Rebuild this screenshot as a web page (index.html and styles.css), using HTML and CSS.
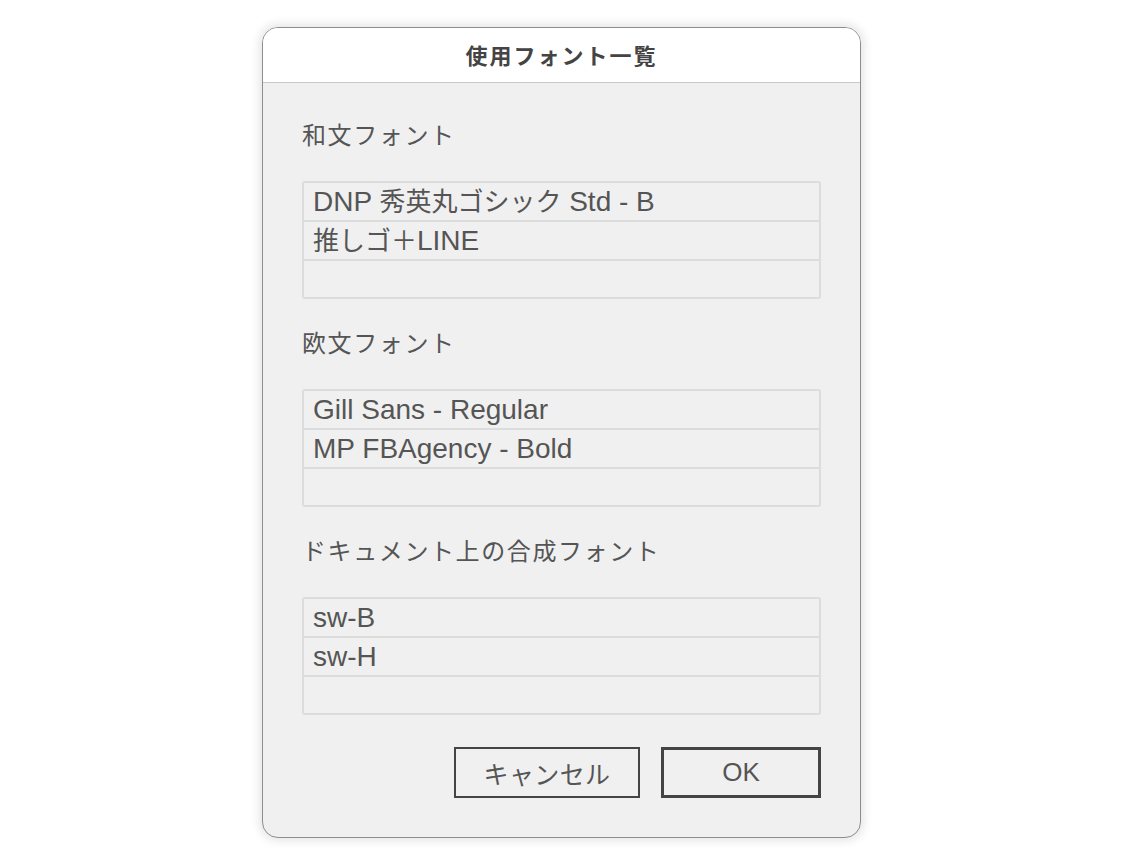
FILE: index.html
```html
<!DOCTYPE html>
<html lang="ja">
<head>
<meta charset="utf-8">
<link rel="stylesheet" href="styles.css">
</head>
<body>
<div class="stage">
  <div class="dialog">
    <div class="header">使用フォント一覧</div>
    <div class="body">
      <section class="group">
        <div class="label">和文フォント</div>
        <div class="list">
          <div class="row">DNP <span class="ja">秀英丸ゴシック</span> Std - B</div>
          <div class="row"><span class="ja">推しゴ＋</span>LINE</div>
          <div class="row last"></div>
        </div>
      </section>
      <section class="group">
        <div class="label">欧文フォント</div>
        <div class="list">
          <div class="row">Gill Sans - Regular</div>
          <div class="row">MP FBAgency - Bold</div>
          <div class="row last"></div>
        </div>
      </section>
      <section class="group">
        <div class="label">ドキュメント上の合成フォント</div>
        <div class="list">
          <div class="row">sw-B</div>
          <div class="row">sw-H</div>
          <div class="row last"></div>
        </div>
      </section>
      <div class="buttons">
        <button class="btn cancel">キャンセル</button>
        <button class="btn ok">OK</button>
      </div>
    </div>
  </div>
</div>
</body>
</html>
```

FILE: styles.css
```css
html, body {
  margin: 0;
  padding: 0;
  background: #ffffff;
}
body {
  font-family: "Liberation Sans", "Noto Sans CJK JP", sans-serif;
  color: #555555;
}
.stage {
  width: 1124px;
  height: 865px;
  display: flex;
  justify-content: center;
  align-items: flex-start;
  padding-top: 27px;
  box-sizing: border-box;
}
.dialog {
  width: 599px;
  height: 811px;
  box-sizing: border-box;
  margin-left: -1px;
  border: 1px solid #8e8e8e;
  border-radius: 16px;
  background: #f0f0f0;
  overflow: hidden;
  box-shadow: 0 0 10px 3px rgba(0,0,0,0.10);
  display: flex;
  flex-direction: column;
}
.header {
  height: 55px;
  flex: none;
  box-sizing: border-box;
  padding-bottom: 3px;
  background: #ffffff;
  border-bottom: 1px solid #c8c8c8;
  display: flex;
  align-items: center;
  justify-content: center;
  font-size: 22px;
  font-weight: bold;
  letter-spacing: 2px;
  color: #444444;
}
.body {
  padding: 38px 39px 0 39px;
  display: flex;
  flex-direction: column;
}
.group {
  display: flex;
  flex-direction: column;
  margin-bottom: 30px;
}
.label {
  height: 30px;
  line-height: 30px;
  font-size: 24px;
  letter-spacing: 1.6px;
  color: #555555;
  margin-bottom: 30px;
}
.list {
  border: 2px solid #dcdcdc;
  border-radius: 3px;
  display: flex;
  flex-direction: column;
}
.row {
  height: 37px;
  line-height: 37px;
  font-size: 28px;
  padding-left: 9px;
  color: #555555;
  white-space: nowrap;
}
.row.last {
  height: 36px;
}
.ja {
  font-size: 26px;
}
.row + .row {
  border-top: 2px solid #dcdcdc;
}
.buttons {
  display: flex;
  justify-content: flex-end;
  gap: 21px;
  margin-top: 2px;
}
.btn {
  height: 51px;
  box-sizing: border-box;
  background: transparent;
  font-family: "Liberation Sans", "Noto Sans CJK JP", sans-serif;
  color: #555555;
  padding: 0;
  margin: 0;
}
.cancel {
  width: 186px;
  border: 2px solid #444444;
  font-size: 25px;
  letter-spacing: 0.4px;
}
.ok {
  width: 160px;
  border: 3px solid #444444;
  font-size: 26px;
}
```
